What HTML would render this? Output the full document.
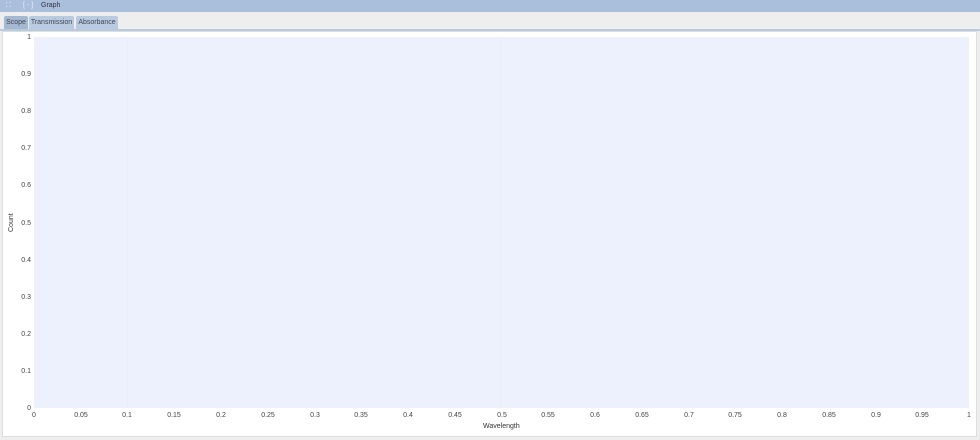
<!DOCTYPE html>
<html><head><style>
*{margin:0;padding:0;box-sizing:border-box}
body{width:980px;height:440px;background:#eeeeee;font-family:"Liberation Sans",sans-serif;position:relative;overflow:hidden;color:#333}
.a{position:absolute}
.title{left:0;top:0;width:980px;height:12px;background:#a9bfdc;font-size:7px;line-height:12px}
.tab{top:16px;height:13px;background:#b9cbe0;font-size:7px;line-height:13px;text-align:center;color:#445;border-radius:2px 2px 0 0}
.xl{top:412px;font-size:7px;width:30px;margin-left:-15px;text-align:center;color:#444}
.yl{left:10px;width:21px;text-align:right;font-size:7px;color:#444;margin-top:-3px}
</style></head><body>
<div class="a title"><span class="a" style="left:6px;color:#eef">⛶</span><span class="a" style="left:23px;color:#eef">[ - ]</span><span class="a" style="left:41px;color:#334">Graph</span></div>
<div class="a tab" style="left:4px;width:24px;background:#a4b8d0">Scope</div>
<div class="a tab" style="left:29px;width:45px">Transmission</div>
<div class="a tab" style="left:76px;width:42px">Absorbance</div>
<div class="a" style="left:0;top:29px;width:980px;height:2px;background:#b9cbe0"></div>
<div class="a" style="left:2px;top:31px;width:975px;height:406px;background:#fff;border:1px solid #ddd"></div>
<div class="a" style="left:34px;top:37px;width:935px;height:371px;background:#edf1fe"></div>
<div class="a" style="left:127px;top:37px;width:1px;height:371px;background:#eaeef9"></div>
<div class="a" style="left:501px;top:37px;width:1px;height:371px;background:#eaeef9"></div>
<div class="a" style="left:8px;top:232px;font-size:7px;transform:rotate(-90deg);transform-origin:left top;color:#333">Count</div>
<div class="a" style="left:483px;top:423px;font-size:7px;color:#333">Wavelength</div>
<div class="a yl" style="top:37px">1</div>
<div class="a yl" style="top:74px">0.9</div>
<div class="a yl" style="top:111px">0.8</div>
<div class="a yl" style="top:148px">0.7</div>
<div class="a yl" style="top:185px">0.6</div>
<div class="a yl" style="top:223px">0.5</div>
<div class="a yl" style="top:260px">0.4</div>
<div class="a yl" style="top:297px">0.3</div>
<div class="a yl" style="top:334px">0.2</div>
<div class="a yl" style="top:371px">0.1</div>
<div class="a yl" style="top:408px">0</div>
<div class="a xl" style="left:34px">0</div>
<div class="a xl" style="left:81px">0.05</div>
<div class="a xl" style="left:127px">0.1</div>
<div class="a xl" style="left:174px">0.15</div>
<div class="a xl" style="left:221px">0.2</div>
<div class="a xl" style="left:268px">0.25</div>
<div class="a xl" style="left:315px">0.3</div>
<div class="a xl" style="left:361px">0.35</div>
<div class="a xl" style="left:408px">0.4</div>
<div class="a xl" style="left:455px">0.45</div>
<div class="a xl" style="left:502px">0.5</div>
<div class="a xl" style="left:548px">0.55</div>
<div class="a xl" style="left:595px">0.6</div>
<div class="a xl" style="left:642px">0.65</div>
<div class="a xl" style="left:689px">0.7</div>
<div class="a xl" style="left:735px">0.75</div>
<div class="a xl" style="left:782px">0.8</div>
<div class="a xl" style="left:829px">0.85</div>
<div class="a xl" style="left:876px">0.9</div>
<div class="a xl" style="left:922px">0.95</div>
<div class="a xl" style="left:969px">1</div>
</body></html>
